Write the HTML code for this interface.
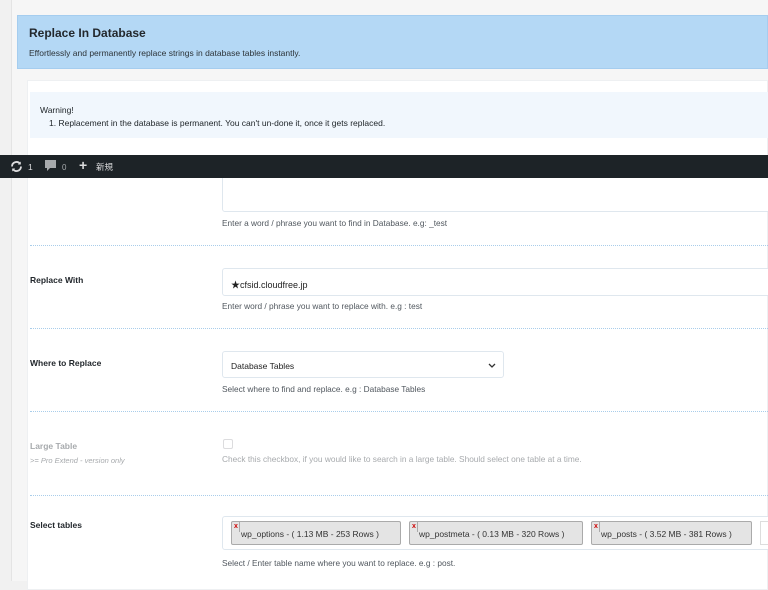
<!DOCTYPE html>
<html><head><meta charset="utf-8"><style>
*{box-sizing:border-box;margin:0;padding:0}
body{width:768px;height:581px;overflow:hidden;background:#f1f1f1;font-family:"Liberation Sans","Noto Sans CJK JP",sans-serif;color:#1d2327;position:relative;font-size:9px}
.wrap{position:absolute;left:11px;top:0;width:757px;height:581px;background:#f6f6f6;border-left:1px solid #e4e4e4}
.hdr{position:absolute;left:17px;top:15px;width:751px;height:54px;background:#b4d8f5;border:1px solid #a5cdef}
.hdr h1{position:absolute;left:11px;top:10px;font-size:12px;font-weight:bold;color:#23282d}
.hdr p{position:absolute;left:11px;top:32px;font-size:8.5px;color:#2c3338}
.panel{position:absolute;left:27px;top:80px;width:741px;height:510px;background:#fff;border:1px solid #eef0f2}
.warn{position:absolute;left:30px;top:92px;width:738px;height:46px;background:#f1f7fd}
.warn .t{position:absolute;left:10px;top:13px;font-size:8.5px}
.warn .l{position:absolute;left:19px;top:26px;font-size:8.5px}
.bar{position:absolute;left:0;top:155px;width:768px;height:23px;background:#1d2327;color:#dcdcde}
.lab{position:absolute;left:30px;font-size:8.5px;font-weight:bold;color:#23282d}
.hint{position:absolute;left:222px;font-size:8.3px;color:#50575e}
.inp{position:absolute;left:222px;width:560px;border:1px solid #dfe7ee;border-radius:3px;background:#fff}
.dash{position:absolute;left:30px;width:738px;border-top:1px dotted #a9cdea}
.chip{position:absolute;top:521px;height:24px;background:#e4e4e4;border:1px solid #aaa;border-radius:2px;font-size:8.5px;color:#333;padding:7px 0 0 9px}
.chip b{position:absolute;left:2px;top:1px;color:#c00;font-size:7px}
.chip i{position:absolute;left:7px;top:0;height:10px;border-left:1px solid #aaa}
</style></head><body>
<div class="wrap"></div>
<div class="hdr"><h1>Replace In Database</h1><p>Effortlessly and permanently replace strings in database tables instantly.</p></div>
<div class="panel"></div>
<div class="warn"><div class="t">Warning!</div><div class="l">1. Replacement in the database is permanent. You can't un-done it, once it gets replaced.</div></div>

<div class="inp" style="top:170px;height:42px"></div>
<div class="hint" style="top:218px">Enter a word / phrase you want to find in Database. e.g: _test</div>
<div class="dash" style="top:245px"></div>

<div class="lab" style="top:275px">Replace With</div>
<div class="inp" style="top:268px;height:28px;font-size:9px;padding:9px 0 0 8px;color:#222">★cfsid.cloudfree.jp</div>
<div class="hint" style="top:301px">Enter word / phrase you want to replace with. e.g : test</div>
<div class="dash" style="top:328px"></div>

<div class="lab" style="top:358px">Where to Replace</div>
<div class="inp" style="top:351px;height:27px;width:282px;font-size:8.5px;padding:9px 0 0 8px;color:#222">Database Tables<svg style="position:absolute;right:7px;top:11px" width="8" height="5" viewBox="0 0 8 5"><path d="M1 1l3 3 3-3" fill="none" stroke="#333" stroke-width="1.3"/></svg></div>
<div class="hint" style="top:384px">Select where to find and replace. e.g : Database Tables</div>
<div class="dash" style="top:411px"></div>

<div class="lab" style="top:441px;color:#a7aaad">Large Table</div>
<div style="position:absolute;left:30px;top:456px;font-size:7.5px;font-style:italic;color:#a7aaad">&gt;= Pro Extend - version only</div>
<div style="position:absolute;left:223px;top:439px;width:10px;height:10px;border:1px solid #dcdcde;border-radius:2px"></div>
<div class="hint" style="top:454px;color:#a7aaad">Check this checkbox, if you would like to search in a large table. Should select one table at a time.</div>
<div class="dash" style="top:495px"></div>

<div class="lab" style="top:520px">Select tables</div>
<div class="inp" style="top:516px;height:34px"></div>
<div class="chip" style="left:231px;width:170px"><b>x</b><i></i>wp_options - ( 1.13 MB - 253 Rows )</div>
<div class="chip" style="left:409px;width:174px"><b>x</b><i></i>wp_postmeta - ( 0.13 MB - 320 Rows )</div>
<div class="chip" style="left:591px;width:161px"><b>x</b><i></i>wp_posts - ( 3.52 MB - 381 Rows )</div>
<div style="position:absolute;left:760px;top:521px;width:10px;height:24px;border:1px solid #ddd"></div>
<div class="hint" style="top:558px">Select / Enter table name where you want to replace. e.g : post.</div>

<div class="bar">
<svg style="position:absolute;left:10px;top:5px" width="13" height="13" viewBox="0 0 13 13"><path d="M2 6.5a4.5 4.5 0 0 1 8-2.8M11 6.5a4.5 4.5 0 0 1-8 2.8" fill="none" stroke="#dcdcde" stroke-width="1.8"/><path d="M10.8 1.5v3h-3zM2.2 11.5v-3h3z" fill="#dcdcde"/></svg>
<span style="position:absolute;left:28px;top:7px;font-size:8.5px">1</span>
<svg style="position:absolute;left:45px;top:5px" width="11" height="12" viewBox="0 0 11 12"><path d="M0 0h11v8H5l-3 3V8H0z" fill="#a7aaad"/></svg>
<span style="position:absolute;left:62px;top:8px;font-size:8px;color:#a7aaad">0</span>
<span style="position:absolute;left:79px;top:2px;font-size:14px;font-weight:bold">+</span>
<span style="position:absolute;left:96px;top:6px;font-size:8.5px">新規</span>
</div>
</body></html>
